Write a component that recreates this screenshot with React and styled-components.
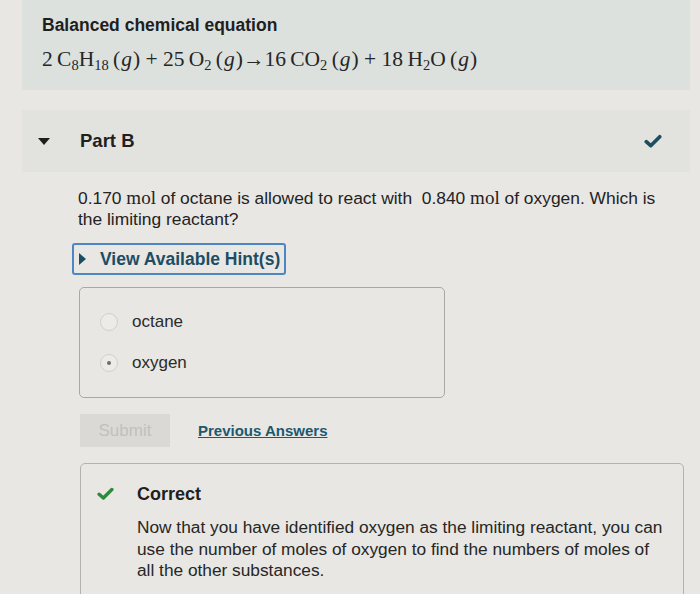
import React from 'react';
import styled, { createGlobalStyle } from 'styled-components';

const GlobalStyle = createGlobalStyle`
	html, body {
		margin: 0;
		padding: 0;
		background: #e8e7e3;
		font-family: 'Liberation Sans', Arial, sans-serif;
		color: #222;
	}
`;

const Page = styled.div`
	width: 700px;
	height: 594px;
	overflow: hidden;
	padding: 0 10px 0 22px;
	box-sizing: border-box;
`;

const EquationPanel = styled.div`
	background: #dce1de;
	height: 90px;
	padding: 15px 20px 0;
	box-sizing: border-box;
`;

const PanelTitle = styled.div`
	font-weight: bold;
	font-size: 17.5px;
	line-height: 20px;
	color: #1f1f1f;
`;

const Equation = styled.div`
	margin-top: 11px;
	font-family: 'Liberation Serif', 'Times New Roman', serif;
	font-size: 21.5px;
	line-height: 26px;
	color: #262626;
	white-space: nowrap;

	sub {
		font-size: 14.5px;
		vertical-align: -4px;
		line-height: 0;
	}
	i {
		margin: 0 1px;
	}
`;

const PartHeader = styled.div`
	margin-top: 20px;
	height: 62px;
	background: #e2e2de;
	display: flex;
	align-items: center;
	padding: 0 28px 0 16px;
`;

const Caret = styled.span`
	width: 0;
	height: 0;
	border-left: 6px solid transparent;
	border-right: 6px solid transparent;
	border-top: 7px solid #1e1e1e;
	margin-right: 30px;
`;

const PartTitle = styled.div`
	flex: 1;
	font-weight: bold;
	font-size: 18.5px;
	color: #1f1f1f;
`;

const PartBody = styled.div`
	padding: 16px 0 0 56px;
`;

const Question = styled.p`
	margin: 0;
	font-size: 17.4px;
	line-height: 21px;
	color: #232323;
	width: 600px;

	.unit {
		font-family: 'Liberation Serif', 'Times New Roman', serif;
		font-size: 19px;
		line-height: 1;
	}
`;

const HintButton = styled.button`
	margin: 13px 0 0 -6px;
	height: 32px;
	padding: 0 4px 0 5px;
	display: flex;
	align-items: center;
	gap: 14px;
	background: transparent;
	border: 2px solid #4c87c4;
	border-radius: 3px;
	font-family: 'Liberation Sans', Arial, sans-serif;
	font-weight: bold;
	font-size: 17.5px;
	color: #1d4d63;
`;

const HintArrow = styled.span`
	width: 0;
	height: 0;
	border-top: 6px solid transparent;
	border-bottom: 6px solid transparent;
	border-left: 7px solid #1d4d63;
`;

const Options = styled.div`
	margin: 12px 0 0 1px;
	width: 366px;
	height: 111px;
	box-sizing: border-box;
	border: 1px solid #a8a8a6;
	border-radius: 5px;
	padding: 24px 0 0 20px;
	display: flex;
	flex-direction: column;
	gap: 21px;
`;

const Option = styled.label`
	display: flex;
	align-items: center;
	gap: 14px;
	font-size: 17px;
	line-height: 20px;
	color: #2b2b2b;
`;

const Radio = styled.span`
	width: 16px;
	height: 16px;
	border-radius: 50%;
	border: 1px solid #d0d0ce;
	background: #ecebe8;
	display: flex;
	align-items: center;
	justify-content: center;

	&::after {
		content: '';
		width: 4px;
		height: 4px;
		border-radius: 50%;
		background: ${p => (p.checked ? '#6d6d6d' : 'transparent')};
	}
`;

const Actions = styled.div`
	margin: 16px 0 0 2px;
	display: flex;
	align-items: center;
	gap: 28px;
`;

const SubmitButton = styled.button`
	width: 90px;
	height: 33px;
	border: none;
	background: #dad9d6;
	color: #c1c1be;
	font-family: 'Liberation Sans', Arial, sans-serif;
	font-size: 17px;
`;

const PrevLink = styled.a`
	font-weight: bold;
	font-size: 15px;
	color: #1d5870;
	text-decoration: underline;
`;

const Feedback = styled.div`
	margin: 16px 0 0 2px;
	width: 604px;
	height: 160px;
	box-sizing: border-box;
	border: 1px solid #b2b2b0;
	border-radius: 5px;
	padding: 19px 20px 0 16px;
	display: grid;
	grid-template-columns: 40px 1fr;
	align-content: start;
	align-items: center;
	row-gap: 12px;
`;

const FeedbackTitle = styled.div`
	font-weight: bold;
	font-size: 18px;
	line-height: 22px;
	color: #1f1f1f;
`;

const FeedbackText = styled.p`
	grid-column: 2;
	margin: 0;
	font-size: 17.3px;
	line-height: 21.5px;
	color: #262626;
	width: 527px;
`;

const Check = ({ color, size }) => (
	<svg width={size} height={size * 0.8} viewBox="0 0 20 16">
		<path d="M2.5 8.5 L7.5 13 L17.5 3" fill="none" stroke={color} strokeWidth="4" strokeLinecap="round" strokeLinejoin="round" />
	</svg>
);

const App = () => (
	<>
		<GlobalStyle />
		<Page>
			<EquationPanel>
				<PanelTitle>Balanced chemical equation</PanelTitle>
				<Equation>
					2&thinsp;C<sub>8</sub>H<sub>18</sub>&thinsp;(<i>g</i>) + 25&thinsp;O<sub>2</sub>&thinsp;(<i>g</i>)→16&thinsp;CO<sub>2</sub>&thinsp;(<i>g</i>) + 18&thinsp;H<sub>2</sub>O&thinsp;(<i>g</i>)
				</Equation>
			</EquationPanel>

			<PartHeader>
				<Caret />
				<PartTitle>Part B</PartTitle>
				<Check color="#1d4e5f" size={18} />
			</PartHeader>

			<PartBody>
				<Question>
					0.170 <span className="unit">mol</span> of octane is allowed to react with&nbsp; 0.840 <span className="unit">mol</span> of oxygen. Which is the limiting reactant?
				</Question>

				<HintButton>
					<HintArrow />
					View Available Hint(s)
				</HintButton>

				<Options>
					<Option>
						<Radio />
						octane
					</Option>
					<Option>
						<Radio checked />
						oxygen
					</Option>
				</Options>

				<Actions>
					<SubmitButton>Submit</SubmitButton>
					<PrevLink>Previous Answers</PrevLink>
				</Actions>

				<Feedback>
					<Check color="#2f8a3c" size={17} />
					<FeedbackTitle>Correct</FeedbackTitle>
					<FeedbackText>
						Now that you have identified oxygen as the limiting reactant, you can use the number of moles of oxygen to find the numbers of moles of all the other substances.
					</FeedbackText>
				</Feedback>
			</PartBody>
		</Page>
	</>
);

export default App;
